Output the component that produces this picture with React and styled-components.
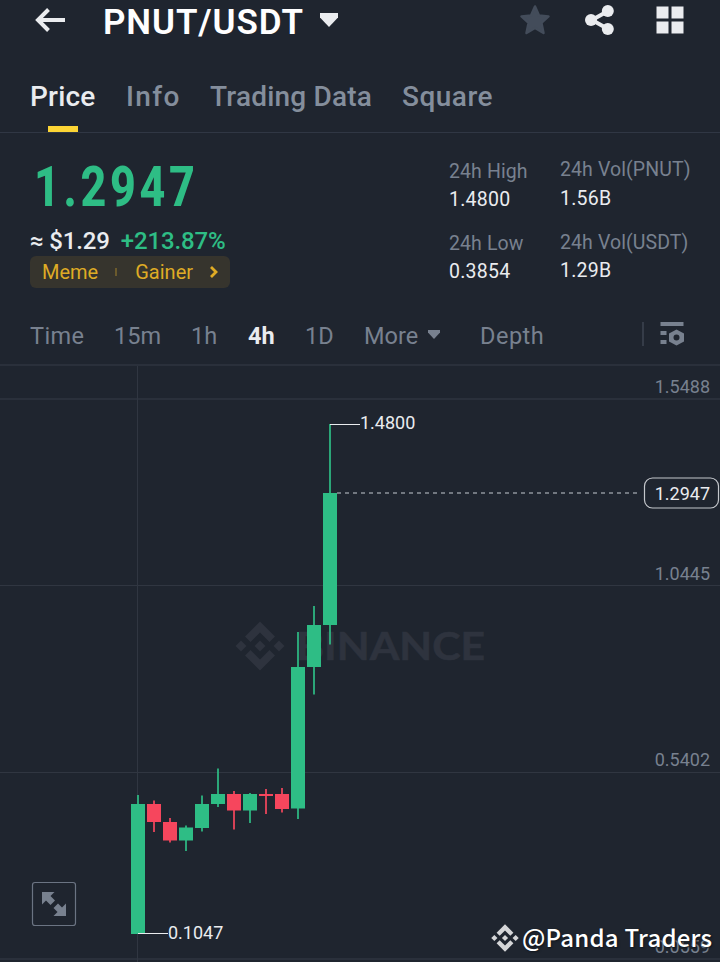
import React, { useState } from "react";
import styled, { createGlobalStyle } from "styled-components";

const GlobalStyle = createGlobalStyle`
  * {
    box-sizing: border-box;
  }
  body {
    margin: 0;
    background-color: #1f252f;
    font-family: Roboto, "Liberation Sans", sans-serif;
  }
  button {
    padding: 0;
    border: none;
    background: none;
    font-family: inherit;
    text-align: left;
    cursor: pointer;
  }
`;

const AppWrapper = styled.div`
  display: flex;
  flex-direction: column;
  width: 720px;
  height: 962px;
  background-color: #1f252f;
  color: #eaecef;
  overflow: hidden;
  white-space: nowrap;
`;

const Header = styled.header`
  display: flex;
  align-items: center;
  height: 41px;
  padding: 0 36px 2px 35px;
`;

const Pair = styled.h1`
  margin: 0 15px 0 36px;
  padding-top: 6px;
  font-size: 35px;
  line-height: 40px;
  font-weight: 600;
  letter-spacing: 0.9px;
  color: #ffffff;
`;

const Actions = styled.div`
  display: flex;
  align-items: center;
  margin-left: auto;
`;

const ShareIcon = styled.svg`
  margin: 0 41px 0 34px;
`;

const Tabs = styled.nav`
  display: grid;
  grid-template-columns: 96px 84px 192px 1fr;
  height: 92px;
  padding: 20px 30px 0;
  border-bottom: 1px solid #303744;
`;

const Tab = styled.button`
  display: flex;
  flex-direction: column;
  justify-content: space-between;
  font-size: 28px;
  line-height: 71px;
  font-weight: 500;
  letter-spacing: ${(props) => props.$spacing || "0.2px"};
  color: ${(props) => (props.$active ? "#eaecef" : "#848e9c")};
`;

const TabLine = styled.span`
  width: 30px;
  height: 6px;
  margin: -6px 0 0 18px;
  background-color: #fcd535;
`;

const Summary = styled.section`
  display: flex;
  height: 174px;
  padding: 0 30px;
`;

const PriceBlock = styled.div`
  width: 419px;
  padding-top: 22px;
`;

const Price = styled.div`
  padding-left: 5px;
  font-size: 56px;
  line-height: 64px;
  font-weight: 800;
  letter-spacing: 4.6px;
  color: #2ebd85;
  transform: scaleX(0.8);
  transform-origin: left;
`;

const Change = styled.div`
  display: flex;
  gap: 11px;
  margin-top: 8px;
  font-size: 24px;
  line-height: 28px;
  font-weight: 500;
  letter-spacing: -0.15px;
`;

const Rise = styled.span`
  color: #2ebd85;
`;

const Tags = styled.div`
  display: flex;
  align-items: center;
  width: 200px;
  height: 32px;
  margin-top: 1px;
  padding: 0 10px 0 12px;
  border-radius: 6px;
  background-color: #36342d;
  font-size: 20px;
  color: #dfab25;
`;

const TagDivider = styled.span`
  width: 2px;
  height: 8px;
  margin: 0 18px 0 17px;
  background-color: #6b5a2c;
`;

const TagArrow = styled.svg`
  margin-left: auto;
`;

const Stats = styled.div`
  width: ${(props) => props.$width};
  padding-top: ${(props) => props.$top};
`;

const Stat = styled.div`
  height: ${(props) => props.$height || "72px"};
  font-size: 19.5px;
  line-height: 28px;
`;

const StatName = styled.div`
  letter-spacing: 0.1px;
  color: #78818f;
`;

const StatValue = styled.div`
  padding-top: ${(props) => props.$top || "0"};
  letter-spacing: 0.25px;
  color: #eaecef;
`;

const Intervals = styled.div`
  display: grid;
  grid-template-columns: 84px 77px 57px 57px 59px 116px 162px 1fr;
  align-items: center;
  height: 57px;
  padding-left: 30px;
`;

const Interval = styled.button`
  display: flex;
  align-items: center;
  gap: 9px;
  padding-top: 2px;
  font-size: 23.5px;
  line-height: 55px;
  font-weight: ${(props) => (props.$active ? 700 : 400)};
  letter-spacing: ${(props) => props.$spacing || "0"};
  color: ${(props) => (props.$active ? "#eaecef" : "#78818f")};
`;

const MoreArrow = styled.svg`
  margin-bottom: 2px;
`;

const Settings = styled.div`
  display: flex;
  align-items: center;
  gap: 16px;
  padding-bottom: 3px;
`;

const Separator = styled.span`
  width: 2px;
  height: 24px;
  background-color: #353c48;
`;

const Chart = styled.svg`
  display: block;
  flex: none;
`;

// top and bottom of the body, then top and bottom of the wick
const candles = [
  { body: [804, 934], wick: [795, 934], up: true },
  { body: [804, 822], wick: [800.5, 832] },
  { body: [822, 840.5], wick: [818, 842.5] },
  { body: [827.5, 840.5], wick: [825.5, 851], up: true },
  { body: [804, 828], wick: [795.5, 831.5], up: true },
  { body: [794, 804], wick: [768.5, 807], up: true },
  { body: [794, 810.5], wick: [791, 829.5] },
  { body: [794, 810.5], wick: [793, 823], up: true },
  { body: [794, 796], wick: [789, 814] },
  { body: [794, 809], wick: [788, 812.5] },
  { body: [667, 808.5], wick: [632, 819], up: true },
  { body: [625, 667], wick: [606, 694.5], up: true },
  { body: [493, 625], wick: [424, 644.5], up: true },
];

const axis = [
  { value: "1.5488", y: 393 },
  { value: "1.0445", y: 580 },
  { value: "0.5402", y: 766 },
  { value: "0.0559", y: 953 },
];

const intervals = [
  { name: "Time", spacing: "0.4px" },
  { name: "15m" },
  { name: "1h" },
  { name: "4h" },
  { name: "1D" },
  { name: "More" },
  { name: "Depth", spacing: "0.5px" },
];

const Logo = ({ x, y, size, color }) => (
  <svg x={x} y={y} width={size} height={size} viewBox="0 0 50 50" fill={color}>
    <path d="M25 0.5L40 15.5L34.5 21L25 11.5L15.5 21L10 15.5Z" />
    <path d="M25 49.5L40 34.5L34.5 29L25 38.5L15.5 29L10 34.5Z" />
    <path d="M25 19.5L30.5 25L25 30.5L19.5 25Z" />
    <path d="M6 19.5L11.5 25L6 30.5L0.5 25Z" />
    <path d="M44 19.5L49.5 25L44 30.5L38.5 25Z" />
  </svg>
);

const PriceChart = () => (
  <Chart width="720" height="598" viewBox="0 364 720 598">
    <g fill="#2a303b">
      <rect x="0" y="364" width="720" height="2" />
      <rect x="0" y="398" width="720" height="2" />
      <rect x="0" y="585" width="720" height="1" fill="#303641" />
      <rect x="0" y="772" width="720" height="1" fill="#303641" />
      <rect x="0" y="958" width="720" height="2" />
      <rect x="137" y="366" width="1" height="596" fill="#303641" />
    </g>

    <Logo x={235} y={621} size={50} color="#2e333e" />
    <text
      x="296"
      y="660"
      fontFamily="Lato, sans-serif"
      fontSize="38.5"
      fontWeight="700"
      textLength="189"
      lengthAdjust="spacingAndGlyphs"
      fill="#2e333e"
      stroke="#2e333e"
      strokeWidth="0.6"
    >
      BINANCE
    </text>

    {candles.map(({ body, wick, up }, index) => (
      <g key={index} fill={up ? "#2ebd85" : "#f6465d"}>
        <rect
          x={137 + index * 16}
          y={wick[0]}
          width="2"
          height={wick[1] - wick[0]}
          opacity="0.85"
        />
        <rect
          x={131 + index * 16}
          y={body[0]}
          width="14"
          height={body[1] - body[0]}
        />
      </g>
    ))}

    <g fontSize="18" fill="#78818f">
      {axis.map(({ value, y }) => (
        <text key={value} x="710" y={y} textAnchor="end">
          {value}
        </text>
      ))}
    </g>

    <g fontSize="18" fill="#eaecef">
      <rect x="330" y="424" width="30" height="1" />
      <text x="360" y="429">1.4800</text>
      <rect x="138" y="933" width="30" height="1" />
      <text x="168" y="939">0.1047</text>
    </g>

    <path
      d="M337 493H638"
      stroke="#8f949c"
      strokeWidth="1.6"
      strokeDasharray="4 4"
    />
    <rect
      x="644.5"
      y="478"
      width="74"
      height="30"
      rx="8"
      fill="#1f252f"
      stroke="#c4c7cc"
      strokeWidth="1.2"
    />
    <text x="710" y="500" fontSize="18" textAnchor="end" fill="#eaecef">
      1.2947
    </text>

    <rect
      x="32.5"
      y="882.5"
      width="43"
      height="43"
      rx="2.5"
      fill="none"
      stroke="#6b7483"
      strokeWidth="1.2"
    />
    <path
      d="M42 892H54.5L50.5 896L55 900.5L50.5 905L46 900.5L42 904.5ZM66 916H53.5L57.5 912L53.5 908L58 903.5L62 907.5L66 903.5Z"
      fill="#78818f"
    />

    <Logo x={491} y={924} size={28} color="#d5d6d8" />
    <text
      x="522"
      y="947"
      fontFamily='"Noto Sans CJK SC", sans-serif'
      fontSize="24"
      fontWeight="500"
      textLength="190"
      fill="#ffffff"
      style={{ textShadow: "1px 1px 2px #10141a" }}
    >
      @Panda Traders
    </text>
  </Chart>
);

const App = () => {
  const [interval, setInterval] = useState("4h");

  return (
    <AppWrapper>
      <GlobalStyle />
      <Header>
        <svg width="32" height="26" viewBox="0 0 32 26" fill="none">
          <path
            d="M30 13H3M13.5 2.5L3 13L13.5 23.5"
            stroke="#eaecef"
            strokeWidth="4"
          />
        </svg>
        <Pair>PNUT/USDT</Pair>
        <svg width="20" height="14" viewBox="0 0 20 14" fill="#eaecef">
          <path d="M1 0H19V4.5L10 14L1 4.5Z" />
        </svg>
        <Actions>
          <svg width="32" height="32" viewBox="0 0 32 32">
            <path
              d="M16 2.5L20 11.4L29.5 12.4L22.4 18.8L24.5 29L16 24L7.5 29L9.6 18.8L2.5 12.4L12 11.4Z"
              fill="#434c5a"
              stroke="#434c5a"
              strokeWidth="2.5"
              strokeLinejoin="round"
            />
          </svg>
          <ShareIcon width="30" height="32" viewBox="0 0 30 32" fill="#eaecef">
            <path d="M23 7L7 16L23 25" fill="none" stroke="#eaecef" strokeWidth="4" />
            <circle cx="22.8" cy="7" r="6" />
            <circle cx="6" cy="16" r="6" />
            <circle cx="22.8" cy="25" r="6" />
          </ShareIcon>
          <svg width="28" height="28" viewBox="0 0 28 28" fill="#eaecef">
            <rect width="12" height="12" x="0.5" y="0.5" />
            <rect width="12" height="12" x="15.5" y="0.5" />
            <rect width="12" height="12" x="0.5" y="15.5" />
            <rect width="12" height="12" x="15.5" y="15.5" />
          </svg>
        </Actions>
      </Header>

      <Tabs>
        <Tab $active>
          Price
          <TabLine />
        </Tab>
        <Tab $spacing="1.4px">Info</Tab>
        <Tab>Trading Data</Tab>
        <Tab $spacing="0.5px">Square</Tab>
      </Tabs>

      <Summary>
        <PriceBlock>
          <Price>1.2947</Price>
          <Change>
            <span>≈ $1.29</span>
            <Rise>+213.87%</Rise>
          </Change>
          <Tags>
            <span>Meme</span>
            <TagDivider />
            <span>Gainer</span>
            <TagArrow width="12" height="14" viewBox="0 0 12 14">
              <path d="M3 2L8 7L3 12" fill="none" stroke="#dfab25" strokeWidth="2.8" />
            </TagArrow>
          </Tags>
        </PriceBlock>
        <Stats $width="111px" $top="25px">
          <Stat>
            <StatName>24h High</StatName>
            <StatValue>1.4800</StatValue>
          </Stat>
          <Stat>
            <StatName>24h Low</StatName>
            <StatValue>0.3854</StatValue>
          </Stat>
        </Stats>
        <Stats $width="130px" $top="23px">
          <Stat $height="73px">
            <StatName>24h Vol(PNUT)</StatName>
            <StatValue $top="1px">1.56B</StatValue>
          </Stat>
          <Stat>
            <StatName>24h Vol(USDT)</StatName>
            <StatValue>1.29B</StatValue>
          </Stat>
        </Stats>
      </Summary>

      <Intervals>
        {intervals.map(({ name, spacing }) => (
          <Interval
            key={name}
            $active={name === interval}
            $spacing={spacing}
            onClick={() => setInterval(name)}
          >
            {name}
            {name === "More" && (
              <MoreArrow width="14" height="14" viewBox="0 0 14 14" fill="#78818f">
                <path d="M1 1H13V3.5L7 10L1 3.5Z" />
              </MoreArrow>
            )}
          </Interval>
        ))}
        <Settings>
          <Separator />
          <svg width="26" height="26" viewBox="0 0 26 26" fill="#78818f">
            <rect x="0.5" y="1" width="23" height="4" />
            <rect x="0.5" y="10" width="6" height="4" />
            <rect x="0.5" y="19" width="6" height="4" />
            <path
              fillRule="evenodd"
              d="M16.5 8.5L24 12.5V20.5L16.5 24.5L9 20.5V12.5ZM16.5 13.5A3 3 0 1 0 16.5 19.5A3 3 0 1 0 16.5 13.5Z"
            />
          </svg>
        </Settings>
      </Intervals>

      <PriceChart />
    </AppWrapper>
  );
};

export default App;
